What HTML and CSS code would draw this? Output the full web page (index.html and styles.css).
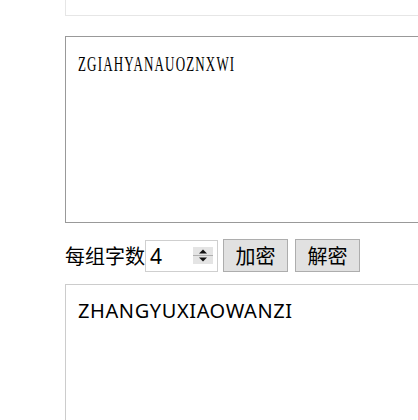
FILE: index.html
```html
<!DOCTYPE html>
<html lang="zh">
<head>
<meta charset="utf-8">
<title>分组加密</title>
<link rel="stylesheet" href="styles.css">
</head>
<body>
<div class="page">
  <div class="box-top"></div>
  <div class="cipher"><span class="cipher-text">ZGIAHYANAUOZNXWI</span></div>
  <div class="controls">
    <span class="label">每组字数</span>
    <div class="num">
      <span class="num-val">4</span>
      <span class="spin">
        <svg width="20" height="17" viewBox="0 0 20 17">
          <rect x="0" y="0" width="20" height="17" fill="#e4e4e4"/>
          <line x1="0" y1="8.5" x2="20" y2="8.5" stroke="#b0b0b0" stroke-width="1"/>
          <polygon points="6,6.5 14,6.5 10,2.5" fill="#111"/>
          <polygon points="6,10.5 14,10.5 10,14.5" fill="#111"/>
        </svg>
      </span>
    </div>
    <button class="btn btn-first">加密</button>
    <button class="btn">解密</button>
  </div>
  <div class="plain">ZHANGYUXIAOWANZI</div>
</div>
</body>
</html>
```
FILE: styles.css
```css
html, body {
  margin: 0;
  padding: 0;
  overflow: hidden;
  background: #fff;
}
body {
  font-family: "Noto Sans", "Noto Sans CJK SC", sans-serif;
  color: #000;
  width: 418px;
  height: 420px;
}
.page {
  padding-left: 65px;
  width: 353px;
}
.box-top {
  height: 15px;
  border-left: 1px solid #e6e6e6;
  border-bottom: 1px solid #e6e6e6;
}
.cipher {
  margin-top: 20px;
  box-sizing: border-box;
  height: 187px;
  border: 1px solid #999;
  border-right: none;
  padding: 15px 12px 0;
  font-family: "Liberation Serif", serif;
  font-size: 20px;
  line-height: 24px;
  letter-spacing: 1.8px;
  color: #000;
  white-space: nowrap;
}
.cipher-text {
  display: inline-block;
  transform: scaleX(0.65);
  transform-origin: left center;
}
.controls {
  margin-top: 16px;
  display: flex;
  align-items: center;
  height: 33px;
}
.label {
  font-family: "Noto Sans CJK SC", sans-serif;
  font-size: 20px;
  line-height: 33px;
}
.num {
  box-sizing: border-box;
  width: 73px;
  height: 32px;
  border: 1px solid #cfcfcf;
  display: flex;
  align-items: center;
  padding-left: 4px;
}
.num-val {
  font-family: "Noto Sans", sans-serif;
  font-size: 21px;
  line-height: 30px;
}
.spin {
  margin-left: auto;
  margin-right: 4px;
  display: flex;
}
.btn {
  box-sizing: border-box;
  width: 65px;
  height: 33px;
  margin: 0 0 0 7px;
  padding: 0;
  border: 1px solid #adadad;
  background: #e1e1e1;
  font-family: "Noto Sans CJK SC", sans-serif;
  font-size: 20px;
  line-height: 30px;
  color: #000;
}
.btn-first {
  margin-left: 5px;
}
.plain {
  margin-top: 12px;
  height: 200px;
  border-top: 1px solid #cccccc;
  border-left: 1px solid #cccccc;
  padding: 13px 12px 0;
  font-family: "Noto Sans", sans-serif;
  font-size: 20px;
  letter-spacing: 0.6px;
  line-height: 26px;
  color: #000;
  white-space: nowrap;
}
```
